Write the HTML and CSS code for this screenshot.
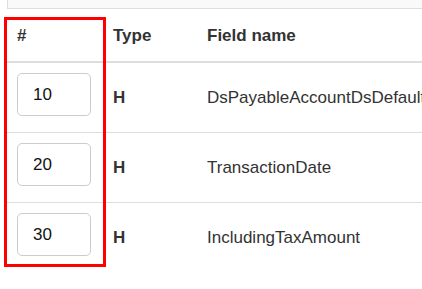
FILE: index.html
```html
<!DOCTYPE html>
<html lang="en">
<head>
  <meta charset="UTF-8">
  <meta name="viewport" content="width=device-width, initial-scale=1.0">
  <title>Fields</title>
  <link rel="stylesheet" href="styles.css">
</head>
<body>
  <div class="page">
    <div class="toolbar"></div>

    <table class="fields">
      <thead>
        <tr>
          <th class="col-seq">#</th>
          <th class="col-type">Type</th>
          <th>Field name</th>
        </tr>
      </thead>
      <tbody>
        <tr>
          <td><input class="seq-input" type="text" value="10"></td>
          <td class="type">H</td>
          <td>DsPayableAccountDsDefaultValue</td>
        </tr>
        <tr>
          <td><input class="seq-input" type="text" value="20"></td>
          <td class="type">H</td>
          <td>TransactionDate</td>
        </tr>
        <tr>
          <td><input class="seq-input" type="text" value="30"></td>
          <td class="type">H</td>
          <td>IncludingTaxAmount</td>
        </tr>
      </tbody>
    </table>

    <!-- highlight around the sequence column -->
    <div class="highlight"></div>
  </div>
</body>
</html>
```

FILE: styles.css
```css
body {
  font-family: "Liberation Sans", Arial, sans-serif;
  font-size: 17px;
  color: #333;
  background: #fff;
  margin: 0;
  overflow: hidden;
}
.page {
  position: relative;
  padding-left: 7px;
  width: 700px;
}
.toolbar {
  height: 8px;
  background: #f9f9f9;
  border: 1px solid #ddd;
  border-top: 0;
}
.fields {
  border-collapse: separate;
  border-spacing: 0;
  width: 100%;
  text-align: left;
}
.fields th,
.fields td {
  padding: 10px;
  line-height: 24px;
  vertical-align: middle;
  white-space: nowrap;
}
.fields th {
  padding-top: 15px;
  padding-bottom: 13px;
  font-weight: bold;
  border-bottom: 2px solid #ddd;
  vertical-align: bottom;
}
.fields tbody tr + tr td {
  border-top: 1px solid #ddd;
}
.col-seq {
  width: 76px;
}
.col-type {
  width: 74px;
}
.type {
  font-weight: bold;
}
.seq-input {
  display: block;
  box-sizing: border-box;
  width: 74px;
  height: 43px;
  margin: 0 0 6px;
  padding: 0 15px;
  font-family: "Liberation Sans", Arial, sans-serif;
  font-size: 17px;
  color: #111;
  background: #fff;
  border: 1px solid #ccc;
  border-radius: 5px;
}
.highlight {
  position: absolute;
  left: 4px;
  top: 17px;
  width: 102px;
  height: 250px;
  box-sizing: border-box;
  border: 3px solid #f00;
}
```
